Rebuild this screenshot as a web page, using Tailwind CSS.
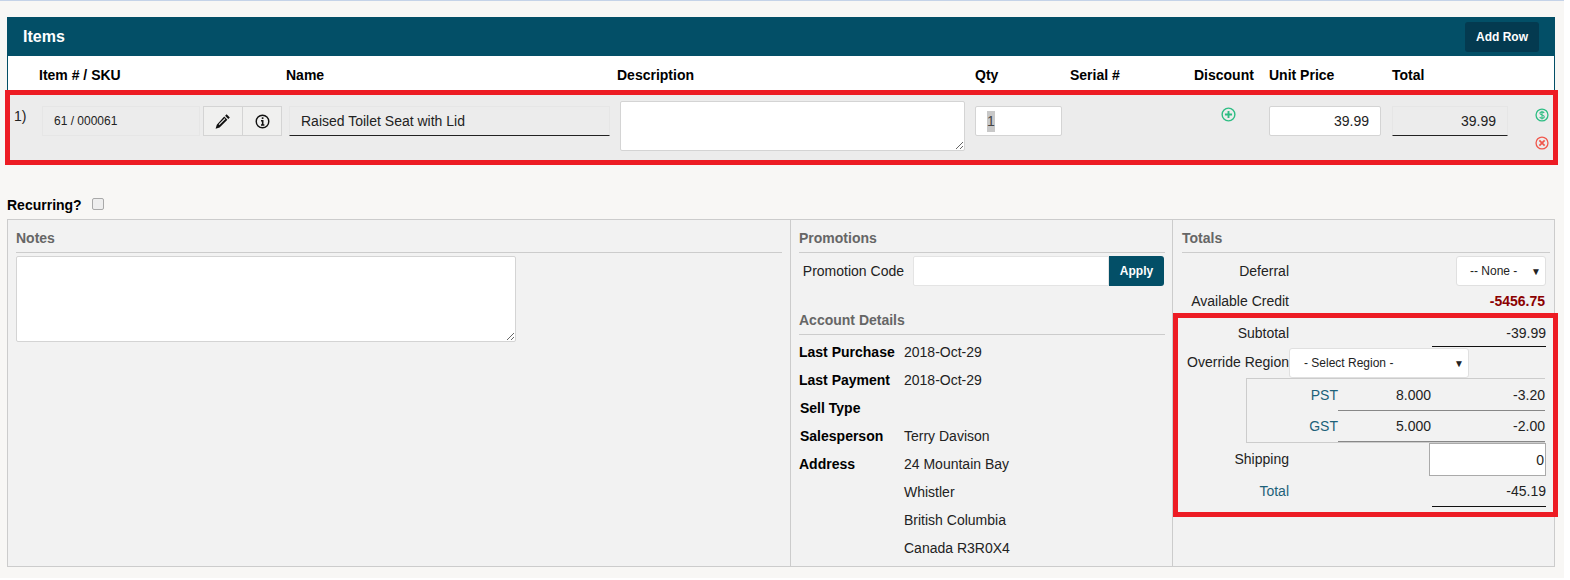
<!DOCTYPE html>
<html lang="en">
<head>
    <meta charset="UTF-8">
    <title>Items</title>
    <script src="https://cdn.jsdelivr.net/npm/@tailwindcss/browser@4"></script>
</head>
<body class="bg-white font-['Liberation_Sans',Arial,sans-serif] text-[14px] text-[#222]">
<div class="w-[1564px] h-[578px] bg-[#f8f7f5] border-t border-[#c5d3e8] pt-[16px] px-[7px] overflow-hidden">

    <!-- Items panel -->
    <div class="w-[1548px] h-[39px] bg-[#034f67] flex items-center justify-between pl-[16px] pr-[16px]">
        <span class="text-white font-bold text-[16px]">Items</span>
        <button class="w-[74px] h-[30px] bg-[#043a50] rounded-[3px] text-white font-bold text-[12px]">Add Row</button>
    </div>
    <div class="w-[1548px] h-[34px] bg-white border-x border-[#034f67] flex items-center pl-[31px] pt-[4px] font-bold text-[14px] text-black">
        <div class="w-[247px]">Item # / SKU</div>
        <div class="w-[331px]">Name</div>
        <div class="w-[358px]">Description</div>
        <div class="w-[95px]">Qty</div>
        <div class="w-[124px]">Serial #</div>
        <div class="w-[75px]">Discount</div>
        <div class="w-[123px]">Unit Price</div>
        <div>Total</div>
    </div>

    <!-- Row, red annotation box -->
    <div class="-ml-[2px] w-[1553px] h-[75px] border-[5px] border-[#ed1c24] bg-[#ececec] flex items-start pl-[4px]">
        <div class="w-[28px] pt-[11px]">1)</div>
        <div class="w-[158px] h-[30px] mt-[11px] border border-[#e6e6e6] flex items-center pl-[11px] text-[12px]">61 / 000061</div>
        <div class="ml-[3px] mt-[11px] w-[79px] h-[30px] flex border border-[#d4d4d4] bg-[#f0f0ef]">
            <div class="w-[39px] border-r border-[#d4d4d4] flex items-center justify-center">
                <svg class="w-[16px] h-[16px]" viewBox="0 0 16 16"><path fill="#111" d="M11.6 1.2l3.2 3.2-1.5 1.5-3.2-3.2zM9.2 3.6l3.2 3.2-7.8 7.8-4 1.2 1.2-4z"/><path fill="#f0f0ef" d="M9.6 5.2l.8.8-6 6-.8-.8z"/></svg>
            </div>
            <div class="flex-1 flex items-center justify-center">
                <svg class="w-[15px] h-[15px]" viewBox="0 0 16 16" fill="none" stroke="#111"><circle cx="8" cy="8" r="6.7" stroke-width="1.5"/><path stroke-width="1.7" d="M6.4 7.2H8.2V11.8M6.4 11.8H10"/><path stroke-width="1.8" d="M7.2 4.4H9"/></svg>
            </div>
        </div>
        <div class="ml-[7px] mt-[11px] w-[321px] h-[30px] border border-[#e6e6e6] border-b-[#222] flex items-center pl-[11px]">Raised Toilet Seat with Lid</div>
        <textarea class="ml-[10px] mt-[6px] w-[345px] h-[50px] bg-white border border-[#d4d4d4] rounded-[2px] block"></textarea>
        <div class="ml-[10px] mt-[11px] w-[87px] h-[30px] bg-white border border-[#d4d4d4] rounded-[2px] flex items-center pl-[11px]"><span class="bg-[#c8c8c8] text-[#444]">1</span></div>
        <div class="w-[207px] pt-[12px] pl-[159px]">
            <svg class="w-[15px] h-[15px]" viewBox="0 0 16 16" fill="none" stroke="#2dbd83" stroke-width="1.5"><circle cx="8" cy="8" r="6.8"/><path stroke-width="2" d="M8 4.2V11.8M4.2 8H11.8"/></svg>
        </div>
        <div class="mt-[11px] w-[112px] h-[30px] bg-white border border-[#d4d4d4] rounded-[2px] flex items-center justify-end pr-[11px]">39.99</div>
        <div class="ml-[11px] mt-[11px] w-[116px] h-[30px] border border-[#e6e6e6] border-b-[#222] flex items-center justify-end pr-[11px]">39.99</div>
        <div class="ml-[27px] mt-[13px] flex flex-col gap-[14px]">
            <svg class="w-[14px] h-[14px]" viewBox="0 0 16 16" fill="none" stroke="#2dbd83" stroke-width="1.5"><circle cx="8" cy="8" r="6.8"/><path stroke-width="1.2" d="M10.5 5.6C10 4.6 9 4.4 8 4.4 6.6 4.4 5.6 5 5.6 6.1 5.6 8.6 10.6 7.4 10.6 9.9 10.6 11 9.4 11.6 8 11.6 6.8 11.6 5.9 11.2 5.4 10.2M8 3V13"/></svg>
            <svg class="w-[14px] h-[14px]" viewBox="0 0 16 16" fill="none" stroke="#f0574c" stroke-width="1.5"><circle cx="8" cy="8" r="6.8"/><path stroke-width="2" d="M5 5L11 11M11 5L5 11"/></svg>
        </div>
    </div>

    <div class="mt-[28px] mb-[2px] h-[24px] flex items-center font-bold text-black">
        Recurring?
        <span class="ml-[10px] -mt-[3px] w-[12px] h-[12px] bg-[#eee] border border-[#a9a9a9] rounded-[2px]"></span>
    </div>

    <!-- Lower panels -->
    <div class="w-[1548px] h-[348px] flex bg-[#f2f2f2] border border-[#ccc]">
        <div class="w-[783px] shrink-0 border-r border-[#ccc] px-[8px] pt-[8px]">
            <div class="h-[25px] border-b border-[#ccc] font-bold text-[14px] text-[#666]">Notes</div>
            <textarea class="mt-[3px] w-[500px] h-[86px] bg-white border border-[#d4d4d4] rounded-[2px] block"></textarea>
        </div>

        <div class="w-[382px] shrink-0 border-r border-[#ccc] pl-[8px] pr-[7px] pt-[8px]">
            <div class="h-[25px] border-b border-[#ccc] font-bold text-[14px] text-[#666]">Promotions</div>
            <div class="mt-[3px] h-[30px] flex items-center">
                <span class="w-[105px] text-right">Promotion Code</span>
                <input class="ml-[9px] w-[196px] h-[30px] bg-white border border-[#e4e4e4] rounded-l-[2px]">
                <button class="w-[55px] h-[30px] bg-[#034f67] rounded-r-[3px] text-white font-bold text-[12px]">Apply</button>
            </div>
            <div class="mt-[24px] h-[25px] border-b border-[#ccc] font-bold text-[14px] text-[#666]">Account Details</div>
            <div class="mt-[3px] grid grid-cols-[105px_1fr] auto-rows-[28px] items-center">
                <b class="text-black">Last Purchase</b><span>2018-Oct-29</span>
                <b class="text-black">Last Payment</b><span>2018-Oct-29</span>
                <b class="text-black pl-[1px]">Sell Type</b><span></span>
                <b class="text-black pl-[1px]">Salesperson</b><span>Terry Davison</span>
                <b class="text-black">Address</b><span>24 Mountain Bay</span>
                <span></span><span>Whistler</span>
                <span></span><span>British Columbia</span>
                <span></span><span>Canada R3R0X4</span>
            </div>
        </div>

        <div class="flex-1 pt-[8px]">
            <div class="ml-[9px] mr-[8px] h-[25px] border-b border-[#ccc] font-bold text-[14px] text-[#666]">Totals</div>
            <div class="mt-[3px] h-[30px] flex items-center pl-[4px] pr-[12px] justify-between">
                <span class="w-[112px] text-right">Deferral</span>
                <div class="relative w-[90px] h-[30px] bg-white border border-[#e0e0e0] rounded-[3px]">
                    <select class="appearance-none w-full h-full pl-[13px] text-[12px]"><option>-- None -</option></select>
                    <span class="absolute right-[4px] top-[7px] text-[10px] pointer-events-none">▼</span>
                </div>
            </div>
            <div class="h-[27px] flex items-center pt-[4px] pl-[4px] pr-[13px] justify-between">
                <span class="w-[112px] text-right whitespace-nowrap">Available Credit</span>
                <b class="text-[#8b0000]">-5456.75</b>
            </div>

            <!-- red annotation box -->
            <div class="w-[385px] h-[204px] border-[5px] border-[#ed1c24] pr-[7px]">
                <div class="h-[29px] flex justify-between items-center">
                    <span class="w-[111px] text-right pt-[1px]">Subtotal</span>
                    <span class="w-[114px] h-[29px] border-b border-[#111] text-right pt-[5px]">-39.99</span>
                </div>
                <div class="h-[31px] flex items-center">
                    <span class="w-[111px] text-right whitespace-nowrap">Override Region</span>
                    <div class="relative w-[180px] h-[30px] bg-white border border-[#e0e0e0] rounded-[3px]">
                        <select class="appearance-none w-full h-full pl-[14px] text-[12px]"><option>- Select Region -</option></select>
                        <span class="absolute right-[4px] top-[7px] text-[10px] pointer-events-none">▼</span>
                    </div>
                </div>
                <div class="ml-[68px] w-[299px] h-[65px] border border-[#ccc] border-r-0 pt-[1px]">
                    <div class="h-[31px] flex items-center">
                        <span class="w-[91px] text-right text-[#1d6179]">PST</span>
                        <div class="flex-1 h-full border-b border-[#888] flex items-center justify-between">
                            <span class="w-[93px] text-right">8.000</span>
                            <span>-3.20</span>
                        </div>
                    </div>
                    <div class="h-[31px] flex items-center">
                        <span class="w-[91px] text-right text-[#1d6179]">GST</span>
                        <div class="flex-1 h-full border-b border-[#888] flex items-center justify-between">
                            <span class="w-[93px] text-right">5.000</span>
                            <span>-2.00</span>
                        </div>
                    </div>
                </div>
                <div class="h-[33px] flex items-center justify-between">
                    <span class="w-[111px] text-right">Shipping</span>
                    <input value="0" class="w-[117px] h-[33px] bg-white border border-[#aaa] text-right pr-[1px]">
                </div>
                <div class="h-[31px] flex justify-between items-start">
                    <span class="w-[111px] text-right text-[#1d6179] pt-[5px]">Total</span>
                    <span class="w-[114px] h-[31px] border-b border-[#111] text-right pt-[5px]">-45.19</span>
                </div>
            </div>
        </div>
    </div>
</div>
</body>
</html>
